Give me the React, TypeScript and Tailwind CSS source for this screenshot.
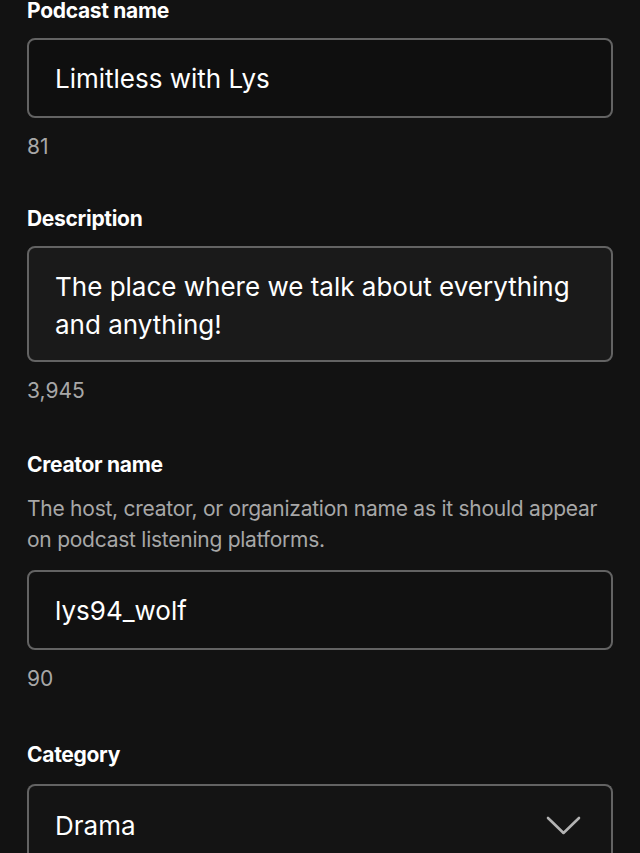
function Field({
  label,
  helper,
  value,
  count,
  multiline,
  bg,
}: {
  label: string;
  helper?: string;
  value: string;
  count?: string;
  multiline?: boolean;
  bg: string;
}) {
  return (
    <div className="flex flex-col">
      <label className="text-[21px] leading-[24px] font-bold text-white tracking-[-0.3px]">{label}</label>
      {helper && (
        <p className="mt-[16px] text-[21px] leading-[31px] text-[#a7a7a7] tracking-[-0.25px]">{helper}</p>
      )}
      <div
        className={
          multiline
            ? `mt-[15px] rounded-[8px] border-2 border-[#636363] ${bg} px-[26px] pt-[20px] pb-[16px] text-[26px] leading-[38px] text-white`
            : `mt-[15px] h-[80px] rounded-[8px] border-2 border-[#636363] ${bg} px-[26px] flex items-center text-[26px] text-white`
        }
      >
        {value}
      </div>
      {count && <span className="mt-[17px] text-[21px] leading-[24px] text-[#a7a7a7]">{count}</span>}
    </div>
  );
}

export default function App() {
  return (
    <div className="h-[853px] overflow-hidden bg-[#121212] px-[27px] font-['Inter',sans-serif]">
      <div className="-mt-[1px] flex flex-col">
        <Field label="Podcast name" value="Limitless with Lys" count="81" bg="bg-[#0f0f0f]" />
        <div className="mt-[48px]">
          <Field
            label="Description"
            value="The place where we talk about everything and anything!"
            count="3,945"
            multiline
            bg="bg-[#1a1a1a]"
          />
        </div>
        <div className="mt-[50px]">
          <Field
            label="Creator name"
            helper="The host, creator, or organization name as it should appear on podcast listening platforms."
            value="lys94_wolf"
            count="90"
            bg="bg-[#111111]"
          />
        </div>
        <div className="mt-[52px] flex flex-col">
          <label className="text-[21px] leading-[24px] font-bold text-white tracking-[-0.3px]">Category</label>
          <div className="mt-[17px] h-[90px] rounded-t-[8px] border-2 border-b-0 border-[#636363] bg-[#141414] pl-[26px] pr-[30px] flex items-start pt-[20px] justify-between text-[26px] text-white">
            <span>Drama</span>
            <svg width="35" height="20" viewBox="0 0 35 20" className="mt-[10px]" fill="none">
              <polyline points="2,2 17.5,17 33,2" stroke="#b3b3b3" strokeWidth="2.6" strokeLinecap="round" strokeLinejoin="round" />
            </svg>
          </div>
        </div>
      </div>
    </div>
  );
}
